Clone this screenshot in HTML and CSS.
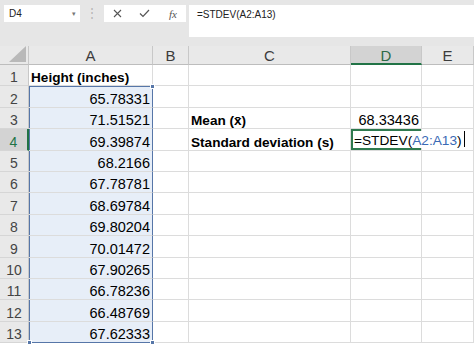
FILE: index.html
```html
<!DOCTYPE html>
<html>
<head>
    <title>STDEV</title>
    <link rel="stylesheet" href="styles.css">
</head>
<body>
    <div class="toolbar">
        <div class="namebox"><span>D4</span><span class="drop">&#9662;</span></div>
        <div class="grip">&#8942;</div>
        <div class="fxbtns">
            <svg class="ico-x" width="9" height="9" viewBox="0 0 9 9"><path d="M1 1L8 8M8 1L1 8" stroke="#555" stroke-width="1.1" fill="none"/></svg>
            <svg class="ico-ok" width="11" height="9" viewBox="0 0 11 9"><path d="M1 4.5L4 7.5L10 1" stroke="#555" stroke-width="1.2" fill="none"/></svg>
            <span class="fx">fx</span>
        </div>
        <div class="formula">=STDEV(A2:A13)</div>
    </div>

    <div class="sheet">
        <div class="corner"><svg width="17" height="16" viewBox="0 0 17 16"><path d="M17 0V16H0Z" fill="#b9b9b9"/></svg></div>
        <div class="colhead">A</div>
        <div class="colhead">B</div>
        <div class="colhead">C</div>
        <div class="colhead sel">D</div>
        <div class="colhead">E</div>

        <div class="rowhead">1</div>
        <div class="cell label">Height (inches)</div>
        <div class="cell"></div><div class="cell"></div><div class="cell"></div><div class="cell"></div>

        <div class="rowhead">2</div>
        <div class="cell num ref first">65.78331</div>
        <div class="cell"></div><div class="cell"></div><div class="cell"></div><div class="cell"></div>

        <div class="rowhead">3</div>
        <div class="cell num ref">71.51521</div>
        <div class="cell"></div>
        <div class="cell label">Mean (x&#772;)</div>
        <div class="cell num">68.33436</div>
        <div class="cell"></div>

        <div class="rowhead sel">4</div>
        <div class="cell num ref">69.39874</div>
        <div class="cell"></div>
        <div class="cell label">Standard deviation (s)</div>
        <div class="cell active"><span class="editor">=STDEV(<span class="refname">A2:A13</span>)<span class="caret"></span></span></div>
        <div class="cell"></div>

        <div class="rowhead">5</div>
        <div class="cell num ref">68.2166</div>
        <div class="cell"></div><div class="cell"></div><div class="cell"></div><div class="cell"></div>

        <div class="rowhead">6</div>
        <div class="cell num ref">67.78781</div>
        <div class="cell"></div><div class="cell"></div><div class="cell"></div><div class="cell"></div>

        <div class="rowhead">7</div>
        <div class="cell num ref">68.69784</div>
        <div class="cell"></div><div class="cell"></div><div class="cell"></div><div class="cell"></div>

        <div class="rowhead">8</div>
        <div class="cell num ref">69.80204</div>
        <div class="cell"></div><div class="cell"></div><div class="cell"></div><div class="cell"></div>

        <div class="rowhead">9</div>
        <div class="cell num ref">70.01472</div>
        <div class="cell"></div><div class="cell"></div><div class="cell"></div><div class="cell"></div>

        <div class="rowhead">10</div>
        <div class="cell num ref">67.90265</div>
        <div class="cell"></div><div class="cell"></div><div class="cell"></div><div class="cell"></div>

        <div class="rowhead">11</div>
        <div class="cell num ref">66.78236</div>
        <div class="cell"></div><div class="cell"></div><div class="cell"></div><div class="cell"></div>

        <div class="rowhead">12</div>
        <div class="cell num ref">66.48769</div>
        <div class="cell"></div><div class="cell"></div><div class="cell"></div><div class="cell"></div>

        <div class="rowhead">13</div>
        <div class="cell num ref last">67.62333</div>
        <div class="cell"></div><div class="cell"></div><div class="cell"></div><div class="cell"></div>
    </div>
</body>
</html>
```

FILE: styles.css
```css
body { margin: 0; width: 474px; height: 344px; overflow: hidden; background: #fff; font-family: "Liberation Sans", Arial, sans-serif; color: #000; }

.toolbar { display: flex; align-items: flex-start; height: 46px; box-sizing: border-box; padding: 5px 0 0 4px; background: #e6e6e6; }
.namebox { display: flex; justify-content: space-between; align-items: center; width: 76px; height: 17px; box-sizing: border-box; padding: 0 4px 0 5px; background: #fff; font-size: 10px; color: #222; }
.drop { font-size: 7px; color: #777; }
.grip { width: 24px; text-align: center; font-size: 12px; line-height: 17px; color: #b4b4b4; }
.fxbtns { display: flex; align-items: center; width: 82px; height: 17px; background: #fff; }
.ico-x { margin-left: 9px; }
.ico-ok { margin-left: 17px; }
.fx { margin-left: 19px; font-family: "Liberation Serif", serif; font-style: italic; font-size: 11px; color: #555; }
.formula { flex: 1; height: 32px; margin-left: 3px; box-sizing: border-box; padding: 4px 8px; background: #fff; font-size: 10px; line-height: 12px; color: #222; }

.sheet { display: grid; grid-template-columns: 29px 124px 36px 162px 71px 1fr; grid-template-rows: 19px repeat(13, 21.4px); }
.sheet > div { box-sizing: border-box; display: flex; white-space: nowrap; }

.corner { align-items: flex-end; justify-content: flex-end; padding: 0 2px 2px 0; background: #e9e9e9; border-right: 1px solid #c8c8c8; border-bottom: 1px solid #bdbdbd; }
.colhead { justify-content: center; align-items: center; padding-top: 1px; background: #e9e9e9; border-right: 1px solid #c8c8c8; border-bottom: 1px solid #bdbdbd; font-size: 15px; color: #3c3c3c; }
.colhead.sel { background: #d3d3d3; color: #2d6a48; border-bottom: 2px solid #217346; }
.rowhead { justify-content: center; align-items: flex-end; background: #e9e9e9; border-right: 1px solid #c8c8c8; border-bottom: 1px solid #d6d6d6; font-size: 14px; color: #444; }
.rowhead.sel { background: #d3d3d3; color: #217346; border-right: 2px solid #217346; }

.cell { align-items: flex-end; padding: 0 2px; border-right: 1px solid #dcdcdc; border-bottom: 1px solid #dcdcdc; overflow: hidden; }
.label { font-size: 13.6px; font-weight: bold; }
.num { justify-content: flex-end; font-size: 14.5px; }

.ref { background: #e7eef8; border-right-color: #5676a8; box-shadow: inset 1px 0 0 #5676a8; }
.ref.first { position: relative; overflow: visible; box-shadow: inset 1px 0 0 #5676a8, inset 0 1px 0 #5676a8; }
.ref.last { position: relative; overflow: visible; border-bottom-color: #5676a8; }
.ref.first::after, .ref.last::before, .ref.last::after { content: ""; position: absolute; z-index: 1; width: 3px; height: 3px; background: #5676a8; border: 1px solid #fff; }
.ref.first::after { top: -2px; right: -3px; }
.ref.last::before { bottom: -3px; left: -2px; }
.ref.last::after { bottom: -3px; right: -3px; }

.active { overflow: visible; padding: 2px 0 2px 2px; box-shadow: inset 0 0 0 2px #2f7a4f; }
.editor { position: relative; z-index: 1; display: flex; align-items: flex-end; height: 100%; padding: 0 3px 0 1px; background: #fff; font-size: 13.7px; }
.refname { color: #3a6ab5; }
.caret { width: 1px; height: 16px; margin-left: 2px; background: #000; align-self: center; }
```
